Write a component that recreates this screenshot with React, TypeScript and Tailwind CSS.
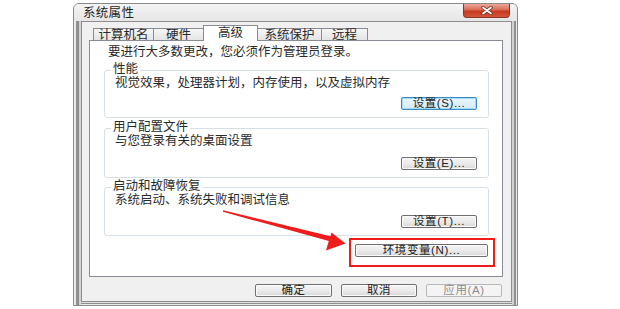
import React from "react";

const F = "font-['Liberation_Sans','Noto_Sans_CJK_SC',sans-serif]";

function Btn({
  label,
  w,
  def,
  disabled,
  className = "",
}: {
  label: string;
  w: string;
  def?: boolean;
  disabled?: boolean;
  className?: string;
}) {
  const base =
    "h-[13px] flex items-center justify-center rounded-[2px] border text-[11.5px] leading-[11px] tracking-[0.6px] " +
    w +
    " " +
    className;
  if (disabled)
    return (
      <div className={base + " border-[#b5b9bc] bg-[#f4f4f4] text-[#8d8d8d]"}>
        {label}
      </div>
    );
  if (def)
    return (
      <div
        className={
          base +
          " border-[#3c8dc7] bg-[linear-gradient(#eaf6fd,#d4ecf9)] shadow-[inset_0_0_0_1px_#9fdcfa] text-[#222]"
        }
      >
        {label}
      </div>
    );
  return (
    <div
      className={
        base +
        " border-[#707070] bg-[linear-gradient(#f4f4f4_0%,#ebebeb_50%,#d8d8d8_100%)] shadow-[inset_0_0_0_1px_#fbfbfb] text-[#222]"
      }
    >
      {label}
    </div>
  );
}

function Group({
  legend,
  text,
  btn,
  h,
  mt,
  def,
}: {
  legend: string;
  text: string;
  btn: string;
  h: string;
  mt: string;
  def?: boolean;
}) {
  return (
    <div
      className={
        "relative flex flex-col rounded-[3px] border border-[#d5dfe5] " + h + " " + mt
      }
    >
      <span className="absolute left-[6px] top-[-8px] bg-white px-[2px] text-[12.5px] leading-[12px] text-[#2a2a2a]">
        {legend}
      </span>
      <div className="pl-[10px] pt-[6px] text-[12.5px] leading-[12px] text-[#2a2a2a]">
        {text}
      </div>
      <div className="mt-auto mb-[7px] mr-[11px] self-end">
        <Btn label={btn} w="w-[76px]" def={def} />
      </div>
    </div>
  );
}

function Tab({
  label,
  w,
  sel,
  first,
}: {
  label: string;
  w: string;
  sel?: boolean;
  first?: boolean;
}) {
  if (sel)
    return (
      <div
        className={
          "relative z-10 -mb-px -ml-px flex h-[16px] justify-center border-x border-t border-[#898c95] bg-white pt-[1px] text-[12.5px] leading-[12px] text-[#2a2a2a] " +
          w
        }
      >
        {label}
      </div>
    );
  return (
    <div
      className={
        "flex h-[12px] items-center justify-center border-x border-t border-[#898c95] bg-[linear-gradient(#f6f6f6,#e4e4e4)] text-[12.5px] leading-[12px] text-[#2a2a2a] " +
        (first ? "ml-[4px] " : "-ml-px ") +
        w
      }
    >
      {label}
    </div>
  );
}

export default function App() {
  return (
    <div className={"relative h-[309px] w-[620px] overflow-hidden bg-white " + F}>
      <div className="pl-[73px] pt-[3px]">
        <div className="flex h-[303px] w-[445px] flex-col rounded-t-[6px] border border-[#8a8a8a] bg-[#dedede] shadow-[inset_2px_0_0_#ececec,inset_5px_0_0_#8f8f8f,inset_7px_0_0_#d2d2d2,inset_-1px_0_0_#ececec,inset_-3px_0_0_#8f8f8f,inset_-5px_0_0_#d2d2d2,inset_0_-1px_0_#ececec,inset_0_-2px_0_#8f8f8f]">
          {/* title bar */}
          <div className="flex h-[17px] items-start justify-between rounded-t-[5px] bg-[linear-gradient(#f4f4f4,#e6e6e6)] pl-[9px] pr-[7px]">
            <span className="pt-[2px] text-[12.5px] leading-[14px] tracking-[0.3px] text-[#1e1e1e]">
              系统属性
            </span>
            <div className="flex h-[14px] w-[47px] items-center justify-center rounded-b-[4px] border border-t-0 border-[#8c3426] bg-[linear-gradient(#e9a898_0%,#d96a55_45%,#c7391f_55%,#d4543a_100%)]">
              <svg width="14" height="9" viewBox="0 0 14 9">
                <path d="M3 1.5 L11 7.5 M11 1.5 L3 7.5" stroke="#6b2a20" strokeWidth="3.4" strokeLinecap="round" />
                <path d="M3 1.5 L11 7.5 M11 1.5 L3 7.5" stroke="#ffffff" strokeWidth="1.8" strokeLinecap="round" />
              </svg>
            </div>
          </div>
          {/* client */}
          <div className="ml-[7px] mr-[5px] flex h-[281px] flex-col border border-[#8e8e8e] bg-[#f0f0f0] pl-[7px] pr-[8px] pt-[3px]">
            <div className="flex h-[15px] items-end">
              <Tab label="计算机名" w="w-[61px]" first />
              <Tab label="硬件" w="w-[51px]" />
              <Tab label="高级" w="w-[55px]" sel />
              <Tab label="系统保护" w="w-[65px]" />
              <Tab label="远程" w="w-[47px]" />
            </div>
            <div className="flex h-[237px] w-[414px] flex-col border border-[#898c95] bg-white pl-[14px] pr-[13px] pt-[4px]">
              <div className="ml-[4px] text-[12.5px] leading-[14px] text-[#2a2a2a]">
                要进行大多数更改，您必须作为管理员登录。
              </div>
              <Group
                legend="性能"
                text="视觉效果，处理器计划，内存使用，以及虚拟内存"
                btn="设置(S)..."
                h="h-[48px]"
                mt="mt-[11px]"
                def
              />
              <Group
                legend="用户配置文件"
                text="与您登录有关的桌面设置"
                btn="设置(E)..."
                h="h-[50px]"
                mt="mt-[10px]"
              />
              <Group
                legend="启动和故障恢复"
                text="系统启动、系统失败和调试信息"
                btn="设置(T)..."
                h="h-[49px]"
                mt="mt-[9px]"
              />
              <div className="mt-[8px] mr-[1px] self-end">
                <Btn label="环境变量(N)..." w="w-[133px]" />
              </div>
            </div>
            <div className="mt-[7px] flex justify-end gap-[9px] pr-[1px]">
              <Btn label="确定" w="w-[77px]" />
              <Btn label="取消" w="w-[76px]" />
              <Btn label="应用(A)" w="w-[76px]" disabled />
            </div>
          </div>
        </div>
      </div>
      {/* annotation overlay */}
      <div className="absolute left-[349px] top-[238px] h-[29px] w-[146px] border-2 border-[#f01c1c]" />
      <svg className="absolute left-0 top-0" width="620" height="309" viewBox="0 0 620 309">
        <polygon
          points="223,210.3 330.5,236.3 331.5,232.5 345.5,243.5 326,250.5 328.8,241 223,211.8"
          fill="#f01c1c"
        />
      </svg>
    </div>
  );
}
